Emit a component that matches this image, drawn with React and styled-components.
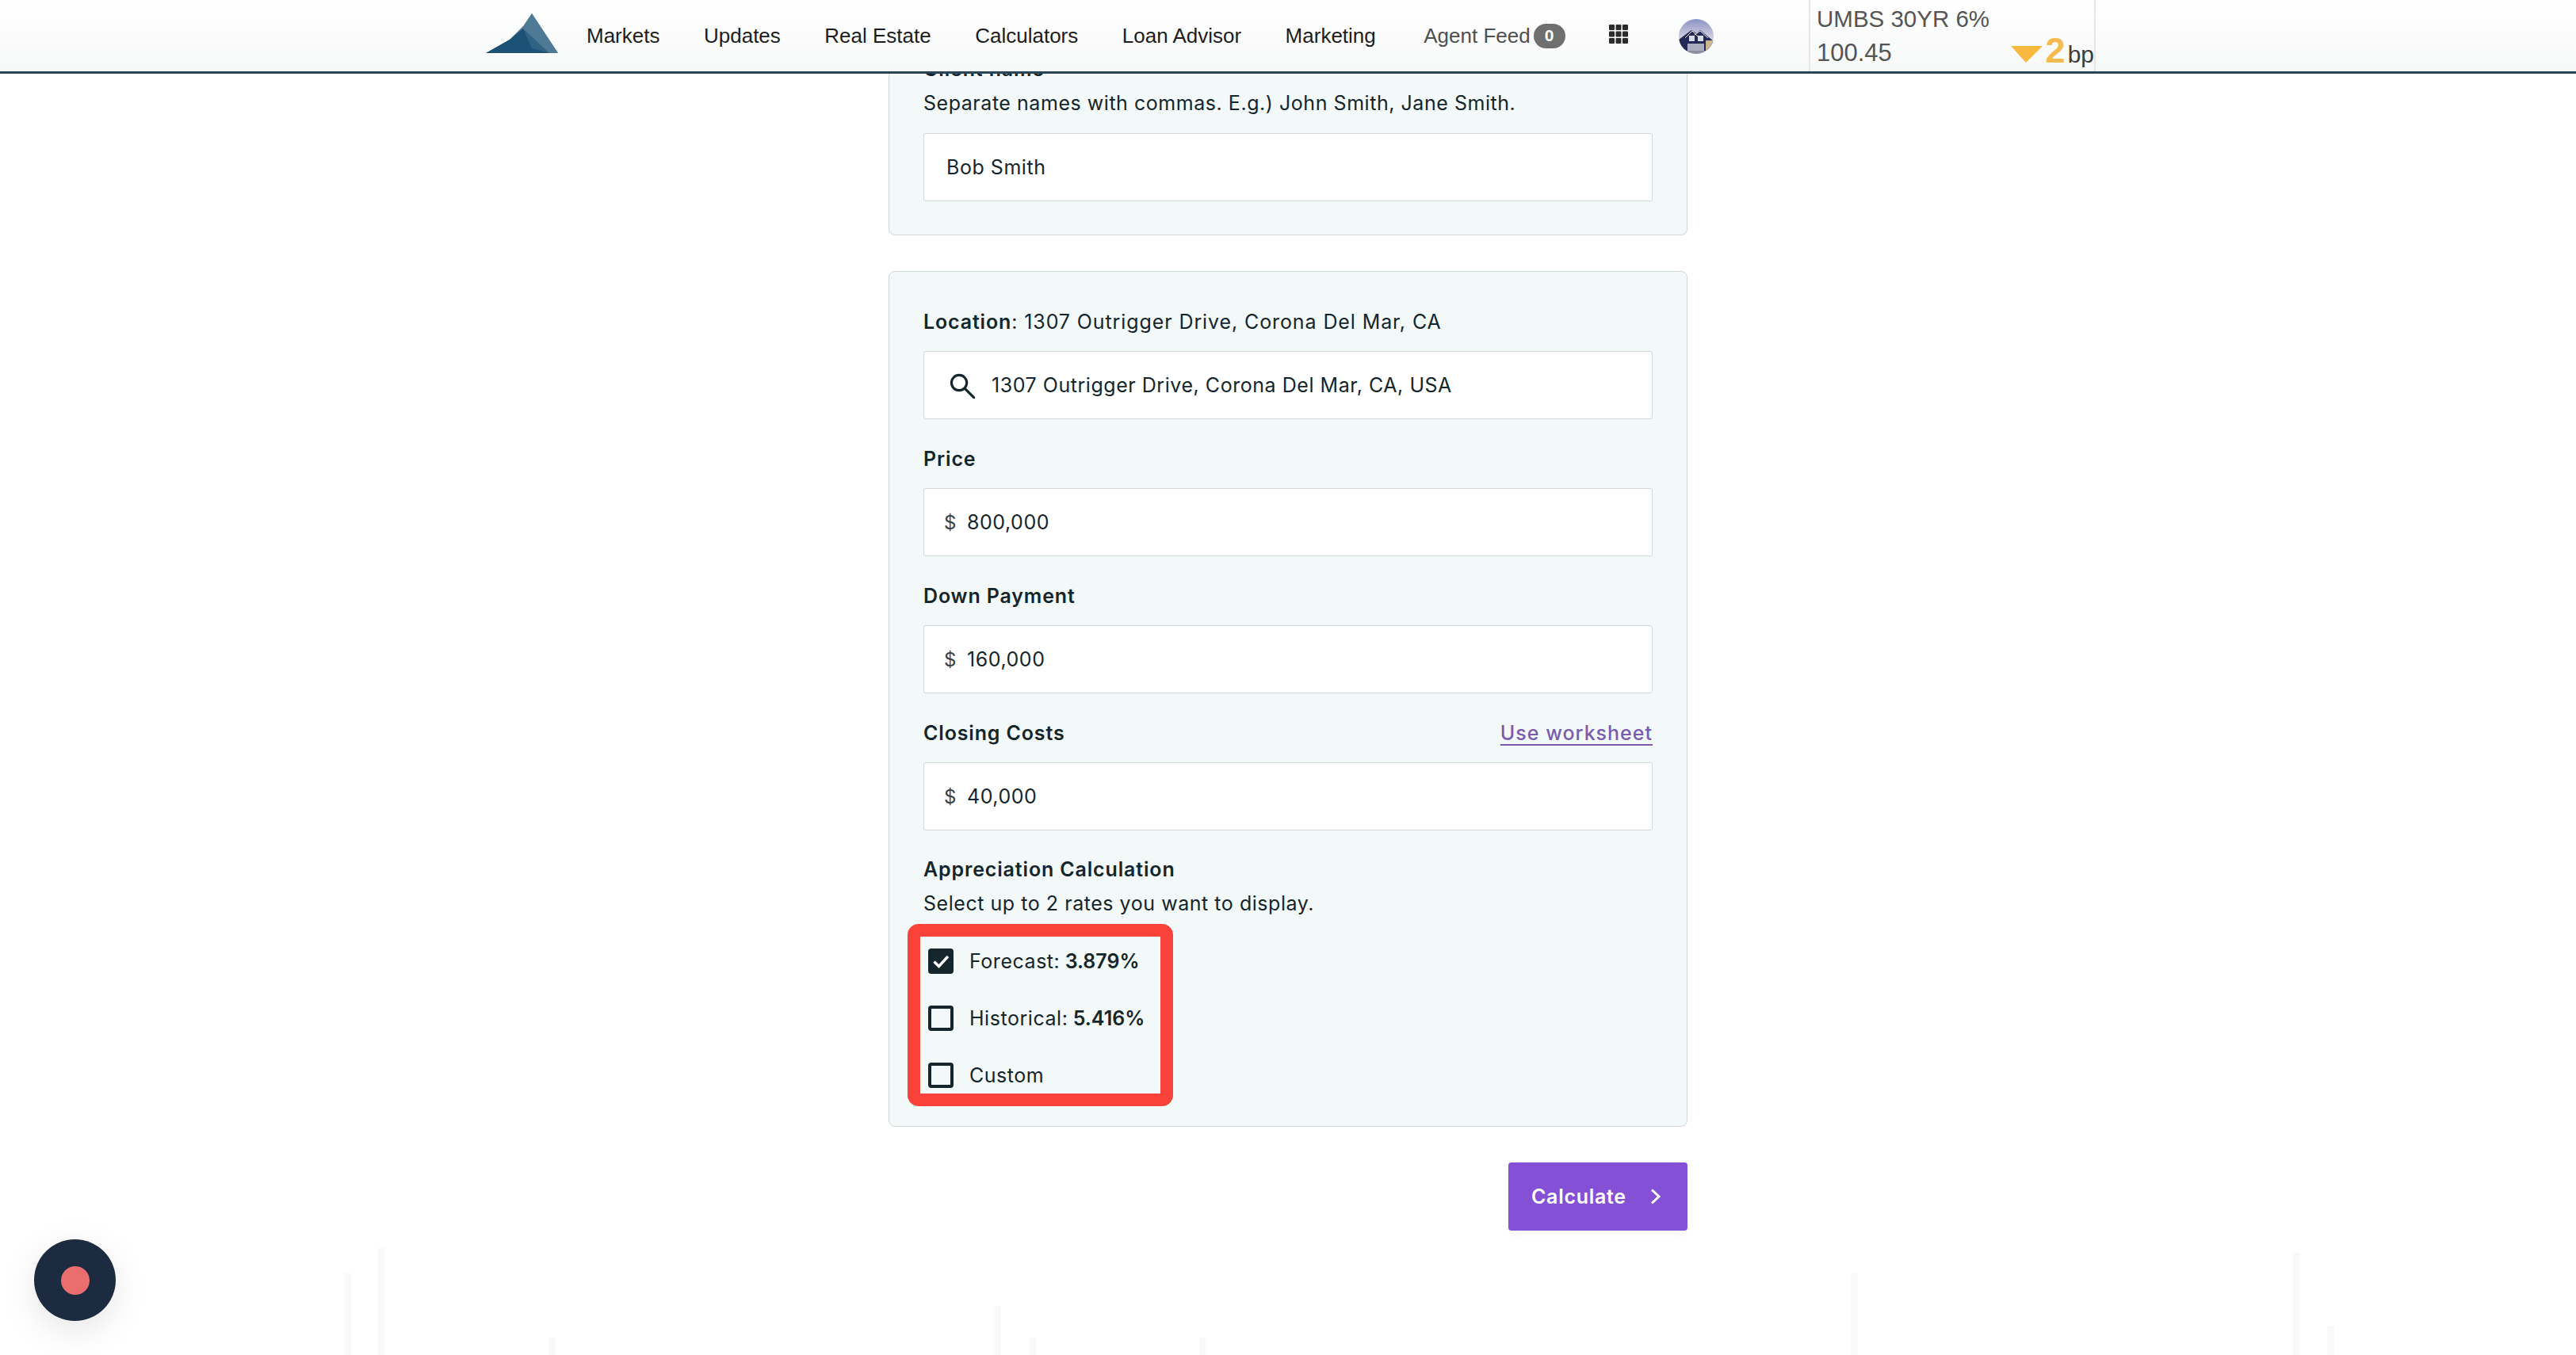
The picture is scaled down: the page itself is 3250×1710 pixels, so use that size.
import React from 'react';
import styled, { createGlobalStyle } from 'styled-components';

const GlobalStyle = createGlobalStyle`
  html, body {
    margin: 0;
    height: 100%;
    overflow: hidden;
    font-family: Inter, "Liberation Sans", sans-serif;
    color: #14262b;
  }
  html { background: #fff; }
  * { box-sizing: border-box; }
`;

const NAV = ['Markets', 'Updates', 'Real Estate', 'Calculators', 'Loan Advisor', 'Marketing'];
const BARS = [
  [434, 1607], [477, 1575], [692, 1688], [1254, 1648], [1298, 1688],
  [1513, 1688], [2335, 1607], [2893, 1581], [2936, 1673],
];

const Logo = () => (
  <LogoMark viewBox="0 0 91 50">
    <polygon points="0,50 30,33 48,15 58,0 91,50" fill="#4b7590" />
    <polygon points="0,50 30,33 47,19 80,50" fill="#1c5176" />
    <polygon points="47,19 59,41 80,50 91,50 58,0 48,15" fill="#4f7a96" />
    <polygon points="47,19 63,34 80,50 58,44" fill="#2f6283" />
  </LogoMark>
);

const GridIcon = () => (
  <GridMark viewBox="0 0 24 24">
    {[0, 8.5, 17].flatMap((y) =>
      [0, 8.5, 17].map((x) => <rect key={`${x}-${y}`} x={x} y={y} width="7" height="7" rx="1" fill="#2b2b2b" />)
    )}
  </GridMark>
);

const HouseAvatar = () => (
  <Avatar viewBox="0 0 44 44">
    <defs>
      <linearGradient id="sky" x1="0" y1="0" x2="0" y2="1">
        <stop offset="0" stopColor="#8a93c4" />
        <stop offset="0.6" stopColor="#dcd6e6" />
      </linearGradient>
    </defs>
    <rect width="44" height="44" fill="url(#sky)" />
    <polygon points="0,26 16,14 22,18 27,14 44,28 44,40 0,40" fill="#232a55" />
    <polyline points="8,24 17,15 25,23" fill="none" stroke="#eceef4" strokeWidth="1" />
    <polyline points="20,20 27,15 37,24" fill="none" stroke="#eceef4" strokeWidth="1" />
    <rect x="13" y="21" width="7" height="7" fill="#d8dbe6" />
    <rect x="24" y="21" width="7" height="7" fill="#d8dbe6" />
    <rect x="11" y="31" width="21" height="11" fill="#a9adbd" />
    <rect x="34" y="27" width="10" height="13" fill="#c9b58e" />
    <rect y="40" width="44" height="4" fill="#8c8fa0" />
  </Avatar>
);

const SearchIcon = () => (
  <SearchMark viewBox="0 0 24 24" fill="none" stroke="#14262b" strokeWidth="2.3">
    <circle cx="9.5" cy="9.5" r="7" />
    <path d="M14.8 14.8 23 23" strokeLinecap="round" />
  </SearchMark>
);

const Field = ({ label, aside, prefix, icon, value }) => (
  <FieldWrap>
    <LabelRow>
      <Label>{label}</Label>
      {aside && <WorkLink href="#">{aside}</WorkLink>}
    </LabelRow>
    <InputBox>
      {prefix && <Prefix>{prefix}</Prefix>}
      {icon}
      {value}
    </InputBox>
  </FieldWrap>
);

const Option = ({ checked, name, rate }) => (
  <OptionRow>
    <Box $checked={checked}>
      {checked && (
        <svg viewBox="0 0 24 24" width="26" height="26" fill="none" stroke="#fff" strokeWidth="3.4">
          <path d="M3.5 12.5 9.5 18.5 21 6" />
        </svg>
      )}
    </Box>
    <span>
      {name}
      {rate && <b> {rate}</b>}
    </span>
  </OptionRow>
);

export default function App() {
  return (
    <>
      <GlobalStyle />
      <Header>
        <Logo />
        <Nav>
          {NAV.map((item) => (
            <NavItem key={item}>{item}</NavItem>
          ))}
          <FeedItem>
            Agent Feed <Badge>0</Badge>
          </FeedItem>
        </Nav>
        <GridIcon />
        <HouseAvatar />
        <Ticker>
          <TickerLine>UMBS 30YR 6%</TickerLine>
          <TickerRow>
            <TickerLine>100.45</TickerLine>
            <Trend>
              <svg width="40" height="22" viewBox="0 0 40 22">
                <polygon points="0,1 40,1 19,22" fill="#f8b93f" />
              </svg>
              <TrendValue>2</TrendValue>
              <TrendUnit>bp</TrendUnit>
            </Trend>
          </TickerRow>
        </Ticker>
      </Header>

      <Main>
        <Card $first>
          <Label>Client name</Label>
          <Hint>Separate names with commas. E.g.) John Smith, Jane Smith.</Hint>
          <InputBox>Bob Smith</InputBox>
        </Card>

        <Card>
          <Field
            label={<><b>Location</b><Regular>: 1307 Outrigger Drive, Corona Del Mar, CA</Regular></>}
            icon={<SearchIcon />}
            value="1307 Outrigger Drive, Corona Del Mar, CA, USA"
          />
          <Field label="Price" prefix="$" value="800,000" />
          <Field label="Down Payment" prefix="$" value="160,000" />
          <Field label="Closing Costs" aside="Use worksheet" prefix="$" value="40,000" />
          <Label>Appreciation Calculation</Label>
          <Hint>Select up to 2 rates you want to display.</Hint>
          <Options>
            <Option checked name="Forecast:" rate="3.879%" />
            <Option name="Historical:" rate="5.416%" />
            <Option name="Custom" />
            <Highlight />
          </Options>
        </Card>

        <Actions>
          <CalcButton>
            Calculate
            <svg width="14" height="22" viewBox="0 0 14 22" fill="none" stroke="#fff" strokeWidth="3">
              <path d="M2 2.5 11 11 2 19.5" />
            </svg>
          </CalcButton>
        </Actions>
      </Main>

      <Backdrop viewBox="0 1560 3250 150">
        {BARS.map(([x, top]) => (
          <rect key={x} x={x} y={top} width="9" height={1710 - top} fill="#f9f9f9" />
        ))}
      </Backdrop>

      <RecordButton>
        <RecordDot />
      </RecordButton>
    </>
  );
}

const Header = styled.header`
  position: fixed;
  top: 0;
  left: 0;
  right: 0;
  z-index: 5;
  height: 93px;
  display: flex;
  align-items: center;
  padding-left: 613px;
  background: linear-gradient(#fff, #f7f8f8);
  border-bottom: 3px solid #2a4556;
  font-family: "Liberation Sans", Arial, sans-serif;
`;

const LogoMark = styled.svg`
  width: 91px;
  height: 50px;
  margin: 0 36px 0 0;
  flex: none;
  transform: translateY(-3px);
`;

const Nav = styled.nav`
  display: flex;
  align-items: center;
  gap: 55.5px;
  width: 1236px;
  flex: none;
`;

const NavItem = styled.span`
  font-size: 26px;
  color: #1d1d1d;
  white-space: nowrap;
`;

const FeedItem = styled(NavItem)`
  display: flex;
  align-items: center;
  gap: 4px;
  margin-left: 5px;
  color: #505050;
`;

const Badge = styled.span`
  display: inline-flex;
  align-items: center;
  justify-content: center;
  width: 40px;
  height: 31px;
  border-radius: 16px;
  background: #6f6f6f;
  color: #fff;
  font-size: 21px;
  font-weight: 700;
`;

const GridMark = styled.svg`
  width: 24px;
  height: 24px;
  flex: none;
  margin-left: 54px;
  transform: translateY(-2px);
`;

const Avatar = styled.svg`
  width: 44px;
  height: 44px;
  flex: none;
  margin-left: 64px;
  border-radius: 50%;
  transform: translateY(1px);
`;

const Ticker = styled.div`
  width: 362px;
  height: 100%;
  flex: none;
  margin-left: 120px;
  padding: 4px 0 0 8px;
  border-left: 2px solid #e6e6e6;
  border-right: 2px solid #e6e6e6;
  display: flex;
  flex-direction: column;
`;

const TickerLine = styled.div`
  font-size: 29.5px;
  line-height: 40px;
  color: #555;
  white-space: nowrap;
`;

const TickerRow = styled.div`
  display: flex;
  justify-content: space-between;
  align-items: center;
  ${TickerLine} { font-size: 31px; }
`;

const Trend = styled.div`
  display: flex;
  align-items: baseline;
  gap: 4px;
`;

const TrendValue = styled.span`
  font-size: 45px;
  line-height: 40px;
  font-weight: 700;
  color: #f6bb4e;
  margin-right: -1px;
`;

const TrendUnit = styled.span`
  font-size: 30px;
  line-height: 40px;
  color: #3d3d3d;
`;

const Main = styled.main`
  width: 1008px;
  margin: 0 auto;
  padding-top: 24px;
  font-size: 25px;
  letter-spacing: 0.54px;
`;

const Card = styled.section`
  padding: ${({ $first }) => ($first ? '42px 43px 42px' : '43px 43px 28px')};
  margin-bottom: 45px;
  background: #f3f8f8;
  border: 1.5px solid #cfd8da;
  border-radius: 8px;
`;

const FieldWrap = styled.div`
  margin-bottom: 30px;
`;

const LabelRow = styled.div`
  display: flex;
  justify-content: space-between;
  align-items: center;
`;

const Label = styled.div`
  font-weight: 600;
  line-height: 40px;
  height: 40px;
  letter-spacing: 0.85px;
  b { font-weight: 600; }
  ${FieldWrap} + & { margin-top: -1px; }
`;

const Regular = styled.span`
  font-weight: 400;
  letter-spacing: 0.9px;
`;

const Hint = styled.div`
  line-height: 42px;
  margin-top: 2px;
  margin-bottom: 17px;
`;

const InputBox = styled.div`
  height: 86px;
  display: flex;
  align-items: center;
  padding: 0 28px;
  background: #fff;
  border: 1.5px solid #d0d9db;
  border-radius: 3px;
  white-space: nowrap;
  ${LabelRow} + & { margin-top: 17px; }
`;

const Prefix = styled.span`
  width: 29px;
  margin-left: -3px;
  font-size: 24px;
  color: #33444a;
`;

const SearchMark = styled.svg`
  width: 33px;
  height: 33px;
  margin: 0 21px 0 3px;
  flex: none;
`;

const WorkLink = styled.a`
  color: #7a5bb0;
  font-weight: 500;
  letter-spacing: 1px;
  text-decoration: underline;
  text-decoration-thickness: 2px;
  text-underline-offset: 5px;
`;

const Options = styled.div`
  position: relative;
  margin-top: -1px;
`;

const OptionRow = styled.div`
  height: 72px;
  display: flex;
  align-items: center;
  gap: 20px;
  padding-left: 6px;
  b { font-weight: 600; letter-spacing: 0; }
`;

const Box = styled.span`
  width: 32px;
  height: 32px;
  flex: none;
  display: flex;
  align-items: center;
  justify-content: center;
  border: 4px solid #14262b;
  border-radius: 4px;
  background: ${({ $checked }) => ($checked ? '#14262b' : 'transparent')};
`;

const Highlight = styled.div`
  position: absolute;
  top: -11px;
  left: -20px;
  width: 335px;
  height: 230px;
  border: 16px solid #f9423a;
  border-radius: 14px;
  pointer-events: none;
`;

const Actions = styled.div`
  display: flex;
  justify-content: flex-end;
`;

const CalcButton = styled.button`
  width: 226px;
  height: 86px;
  padding: 0 0 0 29px;
  display: flex;
  align-items: center;
  gap: 30px;
  border: 0;
  border-radius: 4px;
  background: #8450d6;
  color: #fff;
  font: 600 25px Inter, sans-serif;
  letter-spacing: 0.7px;
  box-shadow: 0 10px 10px -6px rgba(132, 80, 214, 0.06);
`;

const Backdrop = styled.svg`
  position: fixed;
  left: 0;
  bottom: 0;
  width: 3250px;
  height: 150px;
`;

const RecordButton = styled.div`
  position: fixed;
  left: 43px;
  bottom: 43px;
  width: 103px;
  height: 103px;
  display: flex;
  align-items: center;
  justify-content: center;
  border-radius: 50%;
  background: #1c2b40;
  box-shadow: 0 12px 44px rgba(0, 0, 0, 0.1);
`;

const RecordDot = styled.span`
  width: 36px;
  height: 36px;
  border-radius: 50%;
  background: #eb6e6e;
`;
